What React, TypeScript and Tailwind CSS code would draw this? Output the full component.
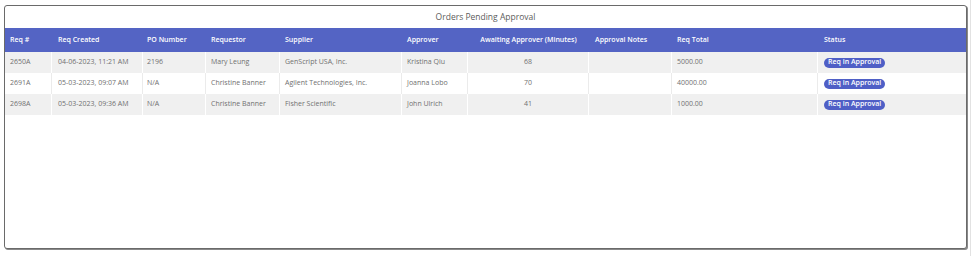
import React from "react";

type Order = {
  req: string;
  created: string;
  po: string;
  requestor: string;
  supplier: string;
  approver: string;
  minutes: string;
  notes: string;
  total: string;
};

const orders: Order[] = [
  { req: "2650A", created: "04-06-2023, 11:21 AM", po: "2196", requestor: "Mary Leung", supplier: "GenScript USA, Inc.", approver: "Kristina Qiu", minutes: "68", notes: "", total: "5000.00" },
  { req: "2691A", created: "05-03-2023, 09:07 AM", po: "N/A", requestor: "Christine Banner", supplier: "Agilent Technologies, Inc.", approver: "Joanna Lobo", minutes: "70", notes: "", total: "40000.00" },
  { req: "2698A", created: "05-03-2023, 09:36 AM", po: "N/A", requestor: "Christine Banner", supplier: "Fisher Scientific", approver: "John Ulrich", minutes: "41", notes: "", total: "1000.00" },
];

const cols = "grid grid-cols-[47px_91px_63px_74px_122px_66px_121px_83px_146px_1fr]";

export default function App() {
  return (
    <div className="flex h-[256px] w-[975px] bg-white font-['Open_Sans',sans-serif]">
      <div className="ml-[4px] mt-[5px] flex h-[244px] w-[963px] flex-col rounded-[3px] border border-[#6a6a6a] bg-white shadow-[1px_1px_0_#8a8a8a]">
        <div className="flex h-[22px] items-center justify-center text-[8.5px] text-[#5c5c5c]">Orders Pending Approval</div>
        <div className={`${cols} h-[24px] items-center bg-[#5464c4] text-[7px] font-semibold text-white`}>
          <div className="pl-[5px]">Req #</div>
          <div className="pl-[6px]">Req Created</div>
          <div className="pl-[4px]">PO Number</div>
          <div className="pl-[5px]">Requestor</div>
          <div className="pl-[5px]">Supplier</div>
          <div className="pl-[5px]">Approver</div>
          <div className="text-center">Awaiting Approver (Minutes)</div>
          <div className="pl-[6px]">Approval Notes</div>
          <div className="pl-[5px]">Req Total</div>
          <div className="pl-[6px]">Status</div>
        </div>
        {orders.map((o, i) => {
          const striped = i % 2 === 0;
          const cell = `flex h-[21px] items-center border-r ${striped ? "border-white" : "border-[#ebebeb]"}`;
          return (
            <div key={o.req} className={`${cols} text-[7px] text-[#707070] ${striped ? "bg-[#f0f0f0]" : "bg-white"}`}>
              <div className={`${cell} pl-[5px]`}>{o.req}</div>
              <div className={`${cell} pl-[6px]`}>{o.created}</div>
              <div className={`${cell} pl-[4px]`}>{o.po}</div>
              <div className={`${cell} pl-[5px]`}>{o.requestor}</div>
              <div className={`${cell} pl-[5px]`}>{o.supplier}</div>
              <div className={`${cell} pl-[5px]`}>{o.approver}</div>
              <div className={`${cell} justify-center`}>{o.minutes}</div>
              <div className={`${cell} pl-[6px]`}>{o.notes}</div>
              <div className={`${cell} pl-[5px]`}>{o.total}</div>
              <div className="flex h-[21px] items-center pl-[6px]">
                <span className="flex h-[10px] items-center rounded-full bg-[#4f5fc6] px-[4px] text-[7px] font-semibold text-white">Req in Approval</span>
              </div>
            </div>
          );
        })}
      </div>
      <div className="ml-[3px] h-full w-px bg-[#e2e2e2]" />
    </div>
  );
}
